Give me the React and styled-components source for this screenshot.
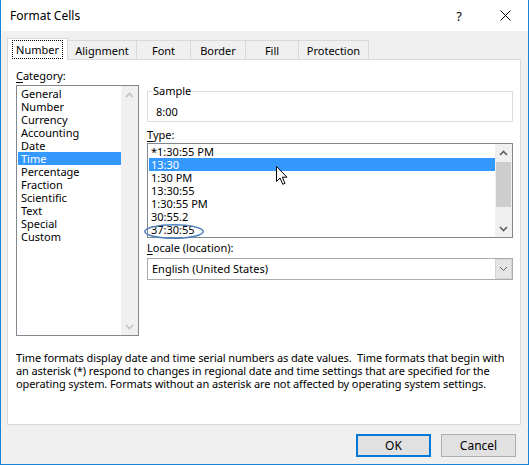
import React from "react";
import styled, { createGlobalStyle } from "styled-components";

const FONT = `"Segoe UI", "Noto Sans", "Open Sans", sans-serif`;

const GlobalStyle = createGlobalStyle`
    html, body { margin: 0; padding: 0; background: #fff; }
    * { box-sizing: border-box; }
`;

const Window = styled.div`
    width: 529px;
    height: 465px;
    border: 1px solid #1883d7;
    border-top: none;
    background: #f0f0f0;
    display: flex;
    flex-direction: column;
    font-family: ${FONT};
    font-size: 11px;
    color: #000;
`;

const TitleBar = styled.div`
    height: 31px;
    background: #fff;
    display: flex;
    align-items: center;
    padding-left: 9px;
    flex-shrink: 0;
`;

const Title = styled.div`
    flex: 1;
    font-size: 12px;
`;

const CaptionButton = styled.div`
    width: 46px;
    height: 31px;
    display: flex;
    align-items: center;
    justify-content: center;
    font-size: 13px;
`;

const Body = styled.div`
    flex: 1;
    padding: 7px 6px 0 6px;
    display: flex;
    flex-direction: column;
`;

const TabRow = styled.div`
    display: flex;
    align-items: flex-end;
    height: 21px;
`;

const Tab = styled.div`
    width: ${p => p.w}px;
    height: ${p => (p.active ? 22 : 19)}px;
    margin-left: ${p => (p.first ? 0 : -1)}px;
    margin-bottom: ${p => (p.active ? -1 : 0)}px;
    border: 1px solid #d9d9d9;
    border-bottom: none;
    background: ${p => (p.active ? "#fff" : "#f0f0f0")};
    position: relative;
    z-index: ${p => (p.active ? 2 : 1)};
    display: flex;
    align-items: center;
    justify-content: center;
    padding-top: ${p => (p.active ? 0 : 1)}px;
    line-height: 13px;
`;

const Focus = styled.span`
    outline: 1px dotted #000;
    outline-offset: 1px;
    padding: 1px 2px;
`;

const Panel = styled.div`
    width: 514px;
    height: 366px;
    background: #fff;
    border: 1px solid #d9d9d9;
    padding: 7px 6px 0 8px;
    display: flex;
    flex-direction: column;
`;

const TopRow = styled.div`
    display: flex;
    gap: 8px;
`;

const LeftCol = styled.div`
    width: 123px;
    display: flex;
    flex-direction: column;
`;

const RightCol = styled.div`
    width: 366px;
    display: flex;
    flex-direction: column;
`;

const Label = styled.div`
    line-height: ${p => p.lh || 16}px;
    margin-top: ${p => p.mt || 0}px;
    height: ${p => p.lh || 16}px;
    u { text-decoration-thickness: 1px; text-underline-offset: 2px; }
`;

const ListBox = styled.div`
    height: ${p => p.h}px;
    border: 1px solid #828790;
    background: #fff;
    display: flex;
    position: relative;
`;

const Items = styled.div`
    flex: 1;
    padding: 1px 0 0 1px;
    overflow: hidden;
`;

const Item = styled.div`
    height: 13px;
    line-height: 13px;
    padding-left: ${p => p.pl || 2}px;
    white-space: nowrap;
    background: ${p => (p.selected ? "#3399ff" : "transparent")};
    color: ${p => (p.selected ? "#fff" : "#000")};
`;

const ScrollBar = styled.div`
    width: 17px;
    background: #f0f0f0;
    display: flex;
    flex-direction: column;
    justify-content: space-between;
`;

const ScrollArrow = styled.div`
    height: 17px;
    display: flex;
    align-items: center;
    justify-content: center;
`;

const Track = styled.div`
    flex: 1;
    display: flex;
    flex-direction: column;
    align-items: center;
`;

const Thumb = styled.div`
    width: 15px;
    height: 45px;
    margin-top: 1px;
    background: #cdcdcd;
`;

const Fieldset = styled.fieldset`
    margin: 17px 0 0 0;
    padding: 0;
    border: 1px solid #dcdcdc;
    min-width: 0;
`;

const Legend = styled.legend`
    margin-left: 4px;
    padding: 0 1px;
    line-height: 14px;
`;

const SampleValue = styled.div`
    line-height: 14px;
    padding: 7px 0 2px 8px;
`;

const Overlay = styled.svg`
    position: absolute;
    left: ${p => p.x}px;
    top: ${p => p.y}px;
    pointer-events: none;
    overflow: visible;
`;

const Select = styled.div`
    margin-top: 2px;
    height: 22px;
    border: 1px solid #acacac;
    background: #fff;
    display: flex;
`;

const SelectText = styled.div`
    flex: 1;
    line-height: 20px;
    padding-left: 4px;
`;

const SelectButton = styled.div`
    width: 17px;
    background: #e5e5e5;
    border: 1px solid #d4d4d4;
    display: flex;
    align-items: center;
    justify-content: center;
`;

const Description = styled.div`
    margin-top: 15px;
    line-height: 13px;
    letter-spacing: -0.1px;
    white-space: nowrap;
`;

const Footer = styled.div`
    display: flex;
    justify-content: flex-end;
    gap: 10px;
    padding: 9px 6px 0 0;
`;

const Button = styled.div`
    width: 75px;
    height: 23px;
    background: #e1e1e1;
    border: ${p => (p.primary ? "2px solid #0078d7" : "1px solid #adadad")};
    display: flex;
    align-items: center;
    justify-content: center;
    font-size: 12px;
`;

const Chevron = ({ up, color = "#606060", w = 1.6 }) => (
    <svg width="9" height="6" viewBox="0 0 9 6">
        <polyline
            points={up ? "1,5 4.5,1.5 8,5" : "1,1 4.5,4.5 8,1"}
            fill="none"
            stroke={color}
            strokeWidth={w}
        />
    </svg>
);

const categories = ["General", "Number", "Currency", "Accounting", "Date", "Time", "Percentage", "Fraction", "Scientific", "Text", "Special", "Custom"];
const types = ["*1:30:55 PM", "13:30", "1:30 PM", "13:30:55", "1:30:55 PM", "30:55.2", "37:30:55"];
const tabs = [
    { name: "Number", w: 61 },
    { name: "Alignment", w: 70 },
    { name: "Font", w: 55 },
    { name: "Border", w: 56 },
    { name: "Fill", w: 54 },
    { name: "Protection", w: 71 },
];

export default function App() {
    return (
        <>
            <GlobalStyle />
            <Window>
                <TitleBar>
                    <Title>Format Cells</Title>
                    <CaptionButton>?</CaptionButton>
                    <CaptionButton>
                        <svg width="11" height="11" viewBox="0 0 11 11">
                            <path d="M0.5 0.5 L10.5 10.5 M10.5 0.5 L0.5 10.5" stroke="#000" strokeWidth="1" />
                        </svg>
                    </CaptionButton>
                </TitleBar>
                <Body>
                    <TabRow>
                        {tabs.map((t, i) => (
                            <Tab key={t.name} w={t.w} first={i === 0} active={i === 0}>
                                {i === 0 ? <Focus>{t.name}</Focus> : t.name}
                            </Tab>
                        ))}
                    </TabRow>
                    <Panel>
                        <TopRow>
                            <LeftCol>
                                <Label lh={18}><u>C</u>ategory:</Label>
                                <ListBox h={251}>
                                    <Items>
                                        {categories.map(c => (
                                            <Item key={c} pl={3} selected={c === "Time"}>{c}</Item>
                                        ))}
                                    </Items>
                                    <ScrollBar>
                                        <ScrollArrow><Chevron up color="#c2c2c2" /></ScrollArrow>
                                        <ScrollArrow><Chevron color="#c2c2c2" /></ScrollArrow>
                                    </ScrollBar>
                                </ListBox>
                            </LeftCol>
                            <RightCol>
                                <Fieldset>
                                    <Legend>Sample</Legend>
                                    <SampleValue>8:00</SampleValue>
                                </Fieldset>
                                <Label mt={5}><u>T</u>ype:</Label>
                                <ListBox h={95}>
                                    <Items>
                                        {types.map(t => (
                                            <Item key={t} selected={t === "13:30"}>{t}</Item>
                                        ))}
                                    </Items>
                                    <ScrollBar>
                                        <ScrollArrow><Chevron up /></ScrollArrow>
                                        <Track><Thumb /></Track>
                                        <ScrollArrow><Chevron /></ScrollArrow>
                                    </ScrollBar>
                                    <Overlay x={-4} y={80} width="60" height="15">
                                        <ellipse cx="30" cy="7.5" rx="29.2" ry="6.8" fill="none" stroke="#4f81bd" strokeWidth="1.5" />
                                    </Overlay>
                                    <Overlay x={128} y={22} width="13" height="20">
                                        <path
                                            d="M0.5 0.5 L0.5 15.5 L4 12 L6.8 18.3 L9 17.3 L6.3 11.2 L11 11.2 Z"
                                            fill="#fff"
                                            stroke="#000"
                                            strokeWidth="1"
                                            strokeLinejoin="miter"
                                        />
                                    </Overlay>
                                </ListBox>
                                <Label mt={2}><u>L</u>ocale (location):</Label>
                                <Select>
                                    <SelectText>English (United States)</SelectText>
                                    <SelectButton><Chevron w={1} /></SelectButton>
                                </Select>
                            </RightCol>
                        </TopRow>
                        <Description>
                            Time formats display date and time serial numbers as date values.&nbsp; Time formats that begin with<br />
                            an asterisk (*) respond to changes in regional date and time settings that are specified for the<br />
                            operating system. Formats without an asterisk are not affected by operating system settings.
                        </Description>
                    </Panel>
                    <Footer>
                        <Button primary>OK</Button>
                        <Button>Cancel</Button>
                    </Footer>
                </Body>
            </Window>
        </>
    );
}
